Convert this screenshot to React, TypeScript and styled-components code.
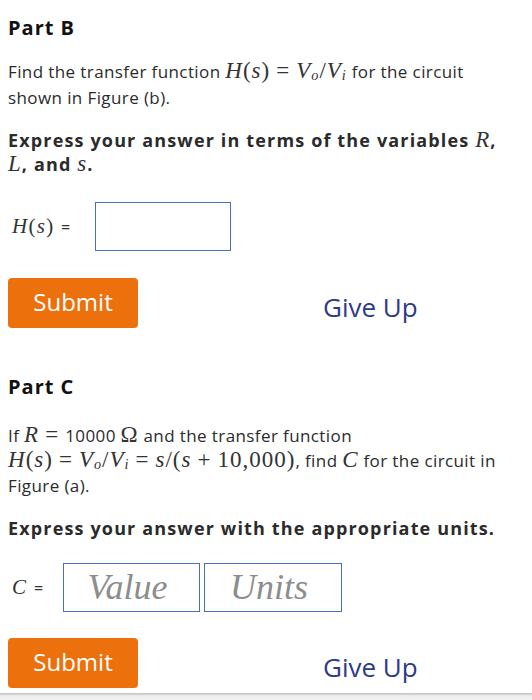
import React from 'react';
import styled, { createGlobalStyle } from 'styled-components';

const GlobalStyle = createGlobalStyle`
  html, body {
    margin: 0;
    padding: 0;
    background: #ffffff;
  }
  body {
    font-family: "Open Sans", Lato, sans-serif;
    color: #2b2b2b;
  }
`;

const Page = styled.div`
  width: 532px;
  height: 700px;
  overflow: hidden;
  display: flex;
  flex-direction: column;
  background: #ffffff;
`;

const Content = styled.div`
  flex: 1;
  min-height: 0;
  padding: 0 7px 0 8px;
`;

const Section = styled.section<{ $top: number }>`
  padding-top: ${(p) => p.$top}px;
`;

const PartTitle = styled.h2`
  margin: 0;
  font-size: 20px;
  line-height: 26px;
  font-weight: 700;
  letter-spacing: 1px;
  color: #111;
`;

const Prompt = styled.p<{ $top: number; $lh: number }>`
  margin: ${(p) => p.$top}px 0 0;
  font-size: 17px;
  line-height: ${(p) => p.$lh}px;
  letter-spacing: 0.4px;
  color: #2b2b2b;
`;

const Instruction = styled.p<{ $top: number }>`
  margin: ${(p) => p.$top}px 0 0;
  font-size: 18px;
  line-height: 24px;
  font-weight: 700;
  letter-spacing: 1.15px;
  color: #2b2b2b;
`;

const M = styled.span<{ $size?: number }>`
  font-family: "Liberation Serif", "DejaVu Serif", serif;
  font-size: ${(p) => p.$size ?? 23}px;
  line-height: 1;
  font-weight: 400;
  letter-spacing: 1px;
  color: #333;
`;

const V = styled.i`
  font-style: italic;
`;

const Op = styled.span`
  margin: 0 6px;
`;

const Sub = styled.sub`
  font-size: 0.62em;
  font-style: italic;
  line-height: 0;
  vertical-align: -0.15em;
`;

const AnswerRow = styled.div<{ $top: number }>`
  margin-top: ${(p) => p.$top}px;
  display: flex;
  align-items: center;
`;

const Label = styled.span<{ $width: number }>`
  box-sizing: border-box;
  width: ${(p) => p.$width}px;
  padding-left: 4px;
  font-family: "Liberation Serif", serif;
  font-size: 21px;
  letter-spacing: 1.3px;
  color: #333;
`;

const Eq = styled.span`
  font-family: "Open Sans", sans-serif;
  font-size: 16px;
  font-style: normal;
`;

const AnswerBox = styled.div<{ $width: number }>`
  box-sizing: border-box;
  width: ${(p) => p.$width}px;
  height: 49px;
  border: 1.5px solid #4a6fb5;
  display: flex;
  align-items: center;
  justify-content: center;
  margin-right: 4px;
`;

const Placeholder = styled.span`
  font-family: "Liberation Serif", serif;
  font-style: italic;
  font-size: 36px;
  color: #8d8d8d;
  padding: 0 8px 2px 0;
`;

const ButtonRow = styled.div<{ $top: number }>`
  margin-top: ${(p) => p.$top}px;
  display: flex;
  align-items: center;
`;

const SubmitButton = styled.button`
  box-sizing: border-box;
  width: 130px;
  height: 50px;
  border: none;
  border-radius: 4px;
  background: #ec710c;
  color: #fff;
  font-family: "Open Sans", sans-serif;
  font-size: 24px;
  padding: 0 0 4px;
  cursor: pointer;
`;

const GiveUp = styled.a`
  margin-left: 185px;
  margin-top: 8px;
  font-size: 26px;
  color: #2d3a86;
  text-decoration: none;
`;

const Footer = styled.div`
  height: 7px;
  flex-shrink: 0;
  background: linear-gradient(#bdbdbd, #ececec 40%, #f3f3f3);
`;

const App: React.FC = () => (
  <>
    <GlobalStyle />
    <Page>
      <Content>
        <Section $top={15}>
          <PartTitle>Part B</PartTitle>
          <Prompt $top={18} $lh={26}>
            Find the transfer function{' '}
            <M>
              <V>H</V>(<V>s</V>)<Op>=</Op>
              <V>V</V>
              <Sub>o</Sub>/<V>V</V>
              <Sub>i</Sub>
            </M>{' '}
            for the circuit
            <br />
            shown in Figure (b).
          </Prompt>
          <Instruction $top={17}>
            Express your answer in terms of the variables{' '}
            <M>
              <V>R</V>
            </M>
            ,
            <br />
            <M>
              <V>L</V>
            </M>
            , and{' '}
            <M>
              <V>s</V>
            </M>
            .
          </Instruction>
          <AnswerRow $top={26}>
            <Label $width={87}>
              <V>H</V>(<V>s</V>) <Eq>=</Eq>
            </Label>
            <AnswerBox $width={136} />
          </AnswerRow>
          <ButtonRow $top={27}>
            <SubmitButton>Submit</SubmitButton>
            <GiveUp href="#">Give Up</GiveUp>
          </ButtonRow>
        </Section>
        <Section $top={46}>
          <PartTitle>Part C</PartTitle>
          <Prompt $top={23} $lh={25}>
            If{' '}
            <M>
              <V>R</V>
              <Op>=</Op>
            </M>
            10000{' '}
            <M>Ω</M> and the transfer function{' '}
            <M>
              <V>H</V>(<V>s</V>)<Op>=</Op>
              <V>V</V>
              <Sub>o</Sub>/<V>V</V>
              <Sub>i</Sub>
              <Op>=</Op>
              <V>s</V>/(<V>s</V>
              <Op>+</Op>10,000)
            </M>
            , find{' '}
            <M>
              <V>C</V>
            </M>{' '}
            for the circuit in Figure (a).
          </Prompt>
          <Instruction $top={18}>Express your answer with the appropriate units.</Instruction>
          <AnswerRow $top={23}>
            <Label $width={55}>
              <V>C</V> <Eq>=</Eq>
            </Label>
            <AnswerBox $width={137}>
              <Placeholder>Value</Placeholder>
            </AnswerBox>
            <AnswerBox $width={138}>
              <Placeholder>Units</Placeholder>
            </AnswerBox>
          </AnswerRow>
          <ButtonRow $top={26}>
            <SubmitButton>Submit</SubmitButton>
            <GiveUp href="#">Give Up</GiveUp>
          </ButtonRow>
        </Section>
      </Content>
      <Footer />
    </Page>
  </>
);

export default App;
